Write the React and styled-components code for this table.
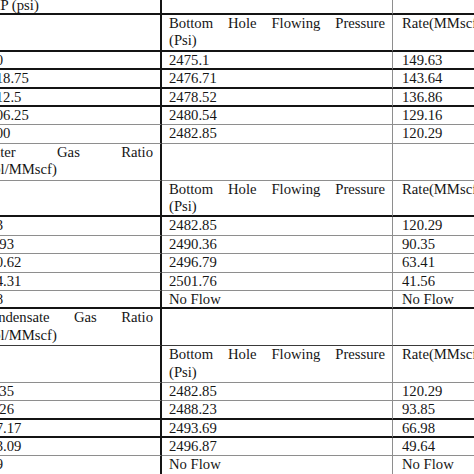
import React from "react";
import styled, { createGlobalStyle } from "styled-components";

const Global = createGlobalStyle`
  html, body {
    margin: 0;
    padding: 0;
    background: #ffffff;
    overflow: hidden;
  }
  body {
    width: 474px;
    height: 474px;
  }
  #root {
    width: 474px;
    height: 474px;
    overflow: hidden;
  }
`;

const RULES = {
  heavy: "2px solid #141414",
  dark: "1px solid #3a3a3a",
  light: "1px solid #8e8e8e",
};

const COLS = {
  1: { right: "2px solid #141414", pad: "0 7px 0 8px" },
  2: { right: "1px solid #8e8e8e", pad: "0 7px 0 7px" },
  3: { right: "none", pad: "0 7px 0 9px" },
};

const Table = styled.div`
  margin: -3.4px 0 0 -27px;
  width: 570px;
  font-family: "Liberation Serif", "Times New Roman", serif;
  font-size: 14.7px;
  color: #151515;
`;

const Row = styled.div`
  display: grid;
  grid-template-columns: 189px 231px 150px;
  height: ${(p) => p.$lines * 18.4}px;
`;

const Cell = styled.div`
  box-sizing: border-box;
  height: 100%;
  border-bottom: ${(p) => RULES[p.$rule]};
  border-right: ${(p) => COLS[p.$col].right};
  padding: ${(p) => COLS[p.$col].pad};
  line-height: 17.4px;
  white-space: nowrap;
  overflow: hidden;
`;

const Justified = styled.div`
  white-space: normal;
  text-align: justify;
  text-align-last: justify;
`;

const Line = styled.div`
  white-space: nowrap;
`;

function DataRow({ a, b, c, rule }) {
  return (
    <Row $lines={1}>
      <Cell $col={1} $rule={rule}>{a}</Cell>
      <Cell $col={2} $rule={rule}>{b}</Cell>
      <Cell $col={3} $rule={rule}>{c}</Cell>
    </Row>
  );
}

function TitleRow({ first, second, rule }) {
  return (
    <Row $lines={2}>
      <Cell $col={1} $rule={rule}>
        <Justified>{first}</Justified>
        <Line>{second}</Line>
      </Cell>
      <Cell $col={2} $rule={rule} />
      <Cell $col={3} $rule={rule} />
    </Row>
  );
}

function SubheadRow({ rule }) {
  return (
    <Row $lines={2}>
      <Cell $col={1} $rule={rule} />
      <Cell $col={2} $rule={rule}>
        <Justified>Bottom Hole Flowing Pressure</Justified>
        <Line>(Psi)</Line>
      </Cell>
      <Cell $col={3} $rule={rule}>Rate(MMscf/D)</Cell>
    </Row>
  );
}

const pressureRows = [
  ["750", "2475.1", "149.63", "heavy"],
  ["1218.75", "2476.71", "143.64", "heavy"],
  ["1312.5", "2478.52", "136.86", "heavy"],
  ["1406.25", "2480.54", "129.16", "light"],
  ["1500", "2482.85", "120.29", "light"],
];

const waterRows = [
  ["103", "2482.85", "120.29", "light"],
  ["46.93", "2490.36", "90.35", "light"],
  ["140.62", "2496.79", "63.41", "light"],
  ["234.31", "2501.76", "41.56", "light"],
  ["328", "No Flow", "No Flow", "heavy"],
];

const condensateRows = [
  ["45.35", "2482.85", "120.29", "light"],
  ["91.26", "2488.23", "93.85", "heavy"],
  ["137.17", "2493.69", "66.98", "heavy"],
  ["183.09", "2496.87", "49.64", "light"],
  ["229", "No Flow", "No Flow", "light"],
];

function Rows({ data }) {
  return data.map(([a, b, c, rule]) => (
    <DataRow key={a} a={a} b={b} c={c} rule={rule} />
  ));
}

export default function App() {
  return (
    <>
      <Global />
      <Table>
        <DataRow a="THP (psi)" b="" c="" rule="heavy" />
        <SubheadRow rule="heavy" />
        <Rows data={pressureRows} />
        <TitleRow first="Water Gas Ratio" second="(bbl/MMscf)" rule="light" />
        <SubheadRow rule="heavy" />
        <Rows data={waterRows} />
        <TitleRow first="Condensate Gas Ratio" second="(bbl/MMscf)" rule="dark" />
        <SubheadRow rule="light" />
        <Rows data={condensateRows} />
      </Table>
    </>
  );
}
